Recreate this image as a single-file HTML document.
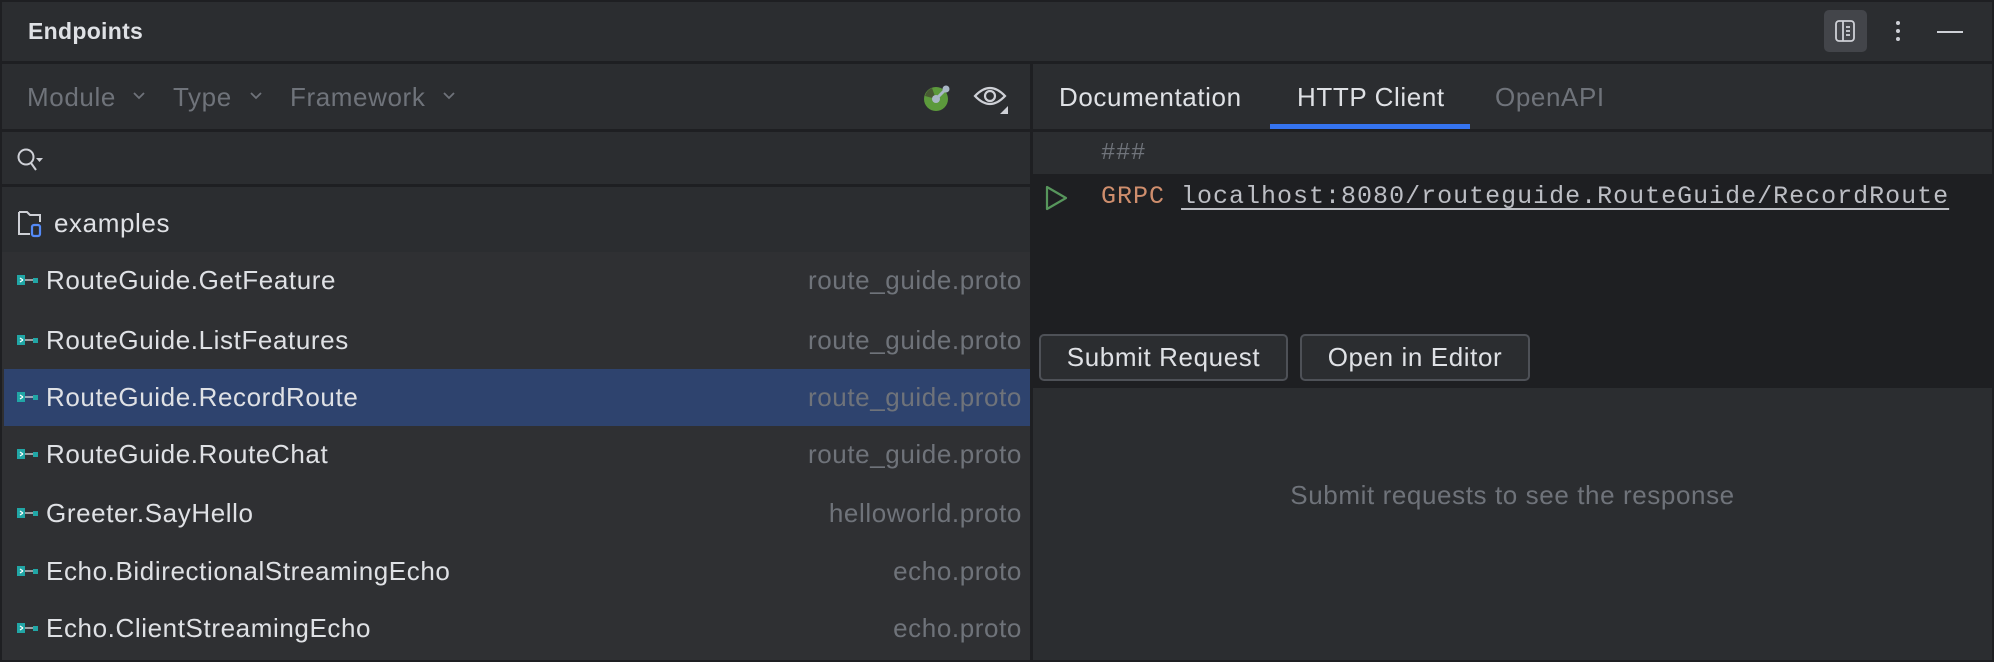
<!DOCTYPE html>
<html><head><meta charset="utf-8"><style>
*{margin:0;padding:0;box-sizing:border-box}
body{width:1994px;height:662px;background:#1e1f22;font-family:"Liberation Sans",sans-serif;overflow:hidden;position:relative;color:#dfe1e5}
.a{position:absolute}
.t{font-size:26px;letter-spacing:0.6px;white-space:nowrap;line-height:30px}
</style></head><body>
<div class="a" style="left:2px;top:2px;width:1990px;height:658px;background:#2b2d30"></div>
<!-- header -->
<div class="a t" style="left:28px;top:16px;font-weight:bold;font-size:23px;letter-spacing:0.3px">Endpoints</div>
<div class="a" style="left:0;top:61px;width:1994px;height:3px;background:#1e1f22"></div>
<div class="a" style="left:1824px;top:10px;width:43px;height:42px;background:#43454a;border-radius:5px"></div>
<svg class="a" style="left:1833px;top:19px" width="24" height="24" viewBox="0 0 24 24" fill="none" stroke="#ced0d6" stroke-width="1.8"><rect x="3" y="2" width="18" height="20" rx="3"/><line x1="10" y1="2" x2="10" y2="22"/><line x1="13" y1="8" x2="17" y2="8"/><line x1="13" y1="12" x2="17" y2="12"/><line x1="13" y1="16" x2="17" y2="16"/></svg>
<div class="a" style="left:1896px;top:21px;width:4px;height:4px;border-radius:2px;background:#ced0d6"></div>
<div class="a" style="left:1896px;top:29px;width:4px;height:4px;border-radius:2px;background:#ced0d6"></div>
<div class="a" style="left:1896px;top:37px;width:4px;height:4px;border-radius:2px;background:#ced0d6"></div>
<div class="a" style="left:1937px;top:31px;width:26px;height:2px;background:#ced0d6"></div>
<!-- vertical divider -->
<div class="a" style="left:1030px;top:62px;width:3px;height:600px;background:#1e1f22"></div>
<!-- left toolbar -->
<svg width="0" height="0" style="position:absolute"><defs><path id="chev" d="M1 1 L6 6 L11 1" fill="none" stroke="#6f737a" stroke-width="1.8"/></defs></svg>
<div class="a t" style="left:27px;top:82px;color:#6f737a">Module</div>
<svg class="a" style="left:133px;top:92px" width="12" height="8"><use href="#chev"/></svg>
<div class="a t" style="left:173px;top:82px;color:#6f737a">Type</div>
<svg class="a" style="left:250px;top:92px" width="12" height="8"><use href="#chev"/></svg>
<div class="a t" style="left:290px;top:82px;color:#6f737a">Framework</div>
<svg class="a" style="left:443px;top:92px" width="12" height="8"><use href="#chev"/></svg>
<svg class="a" style="left:922px;top:82px" width="32" height="32" viewBox="0 0 32 32"><circle cx="14" cy="17" r="12" fill="#5c9a3c"/><path d="M14 17 L3 14 A12 12 0 0 1 10 6 Z" fill="#485a33"/><line x1="14" y1="17" x2="24" y2="7" stroke="#a9b7c6" stroke-width="3"/><circle cx="24" cy="7" r="3.5" fill="#a9b7c6"/><circle cx="14" cy="17" r="4" fill="#a9b7c6"/></svg>
<svg class="a" style="left:972px;top:82px" width="40" height="36" viewBox="0 0 40 36"><path d="M3 14 Q18 -2 33 14 Q18 30 3 14 Z" fill="none" stroke="#ced0d6" stroke-width="2.2"/><circle cx="18" cy="14" r="5" fill="none" stroke="#ced0d6" stroke-width="2.2"/><path d="M36 24 L36 32 L28 32 Z" fill="#ced0d6"/></svg>
<div class="a" style="left:0;top:129px;width:1030px;height:3px;background:#1e1f22"></div>
<!-- search -->
<svg class="a" style="left:16px;top:146px" width="36" height="28" viewBox="0 0 36 28"><circle cx="10" cy="11" r="7.5" fill="none" stroke="#ced0d6" stroke-width="2"/><line x1="15" y1="17" x2="20" y2="24" stroke="#ced0d6" stroke-width="2"/><path d="M20 12 L27 12 L23.5 16 Z" fill="#ced0d6"/></svg>
<div class="a" style="left:0;top:184px;width:1030px;height:3px;background:#1e1f22"></div>
<!-- examples -->
<svg class="a" style="left:17px;top:208px" width="34" height="32" viewBox="0 0 34 32"><path d="M2 4 L10 4 L13 7 L23 7 L23 14 M2 4 L2 26 L13 26" fill="none" stroke="#ced0d6" stroke-width="2"/><rect x="15" y="17" width="8" height="11" rx="2" fill="none" stroke="#548af7" stroke-width="2.2"/></svg>
<div class="a t" style="left:54px;top:208px">examples</div>
<!-- list -->
<div class="a" style="left:2px;top:252px;width:1028px;height:408px;background:#2f3033"></div>
<div class="a" style="left:4px;top:369px;width:1026px;height:57px;background:#2e436e"></div>
<div id="rows"></div>
<!-- right tabs -->
<div class="a t" style="left:1059px;top:82px">Documentation</div>
<div class="a t" style="left:1297px;top:82px">HTTP Client</div>
<div class="a t" style="left:1495px;top:82px;color:#6f737a">OpenAPI</div>
<div class="a" style="left:1270px;top:124px;width:200px;height:6px;background:#3574f0"></div>
<div class="a" style="left:1033px;top:129px;width:961px;height:3px;background:#1e1f22"></div>
<!-- editor -->
<div class="a" style="left:1033px;top:174px;width:961px;height:214px;background:#1e1f22"></div>
<div class="a" style="left:1101px;top:140px;font-family:'Liberation Mono',monospace;font-size:24px;letter-spacing:0.6px;color:#6f737a">###</div>
<svg class="a" style="left:1044px;top:184px" width="26" height="28" viewBox="0 0 26 28"><path d="M3 3 L22 14 L3 25 Z" fill="none" stroke="#57965c" stroke-width="2.2" stroke-linejoin="round"/></svg>
<div class="a" style="left:1101px;top:182px;font-family:'Liberation Mono',monospace;font-size:25px;white-space:nowrap;letter-spacing:1px"><span style="color:#cf8e6d">GRPC</span> <span style="color:#bcbec4;text-decoration:underline;text-underline-offset:5px">localhost:8080/routeguide.RouteGuide/RecordRoute</span></div>
<div class="a t" style="left:1039px;top:334px;width:249px;height:47px;border:2px solid #4e5157;border-radius:5px;background:#2b2d30;text-align:center;line-height:43px">Submit Request</div>
<div class="a t" style="left:1300px;top:334px;width:230px;height:47px;border:2px solid #4e5157;border-radius:5px;background:#2b2d30;text-align:center;line-height:43px">Open in Editor</div>
<div class="a t" style="left:1033px;top:480px;width:959px;text-align:center;color:#6f737a">Submit requests to see the response</div>
<script>
var rows=[["RouteGuide.GetFeature","route_guide.proto",280],["RouteGuide.ListFeatures","route_guide.proto",340],["RouteGuide.RecordRoute","route_guide.proto",397],["RouteGuide.RouteChat","route_guide.proto",454],["Greeter.SayHello","helloworld.proto",513],["Echo.BidirectionalStreamingEcho","echo.proto",571],["Echo.ClientStreamingEcho","echo.proto",628]];
var h="";rows.forEach(function(r){var y=r[2];
h+='<svg class="a" style="left:17px;top:'+(y-5)+'px" width="22" height="10" viewBox="0 0 22 10"><rect x="0" y="0" width="8" height="10" fill="#21a6a6"/><path d="M6 5 L3 3 M6 5 L3 7" stroke="#fff" stroke-width="1.2"/><line x1="8" y1="5" x2="16" y2="5" stroke="#ced0d6" stroke-width="1.4"/><rect x="16" y="3" width="5" height="5" fill="#21a6a6"/></svg>';
h+='<div class="a t" style="left:46px;top:'+(y-15)+'px">'+r[0]+'</div>';
h+='<div class="a t" style="right:972px;top:'+(y-15)+'px;color:#6f737a">'+r[1]+'</div>';});
document.getElementById("rows").innerHTML=h;
</script>
</body></html>
